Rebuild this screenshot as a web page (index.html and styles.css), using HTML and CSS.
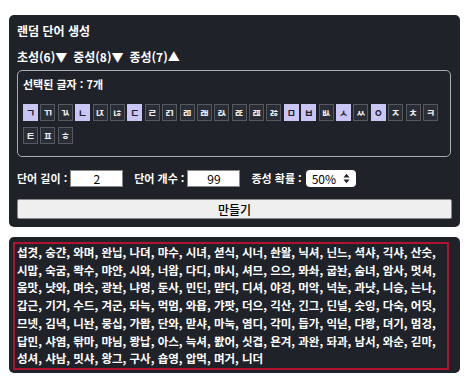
FILE: index.html
```html
<!DOCTYPE html>
<html lang="ko">
<head>
    <meta charset="UTF-8">
    <meta name="viewport" content="width=device-width, initial-scale=1.0">
    <title>랜덤 단어 생성</title>
    <link rel="stylesheet" href="styles.css">
</head>
<body>
    <div class="panel" id="generator">
        <h1 id="title">랜덤 단어 생성</h1>
        <div id="tabs">
            <span>초성(6)▼</span>
            <span>중성(8)▼</span>
            <span>종성(7)▲</span>
        </div>
        <div id="picker">
            <p id="picked">선택된 글자 : 7개</p>
            <div id="jamo">
                <button class="on">ㄱ</button>
                <button>ㄲ</button>
                <button>ㄳ</button>
                <button class="on">ㄴ</button>
                <button>ㄵ</button>
                <button>ㄶ</button>
                <button class="on">ㄷ</button>
                <button>ㄹ</button>
                <button>ㄺ</button>
                <button>ㄻ</button>
                <button>ㄼ</button>
                <button>ㄽ</button>
                <button>ㄾ</button>
                <button>ㄿ</button>
                <button>ㅀ</button>
                <button class="on">ㅁ</button>
                <button class="on">ㅂ</button>
                <button>ㅄ</button>
                <button class="on">ㅅ</button>
                <button>ㅆ</button>
                <button class="on">ㅇ</button>
                <button>ㅈ</button>
                <button>ㅊ</button>
                <button>ㅋ</button>
                <button>ㅌ</button>
                <button>ㅍ</button>
                <button>ㅎ</button>
            </div>
        </div>
        <div id="options">
            <label for="len">단어 길이 :</label>
            <input id="len" type="text" value="2">
            <label for="count" class="next">단어 개수 :</label>
            <input id="count" type="text" value="99">
            <label for="prob" class="next">종성 확률 :</label>
            <select id="prob">
                <option>50%</option>
            </select>
        </div>
        <button id="make">만들기</button>
    </div>
    <div class="panel" id="output">
        <div id="words">섭겻, 숭갼, 와며, 완닙, 나뎌, 먀수, 시녀, 셛식, 시너, 솬왈, 닉셔, 닌느, 셕샤, 긱샤, 산숫, 시맙, 숙굼, 뫅수, 먀얀, 시와, 너왐, 다디, 먀시, 셔므, 으으, 뫄솨, 굽놘, 숨녀, 암사, 멋셔, 움맛, 냣와, 며숫, 광놘, 냐멍, 둔사, 민딘, 먇더, 디셔, 야겅, 머악, 넉눈, 과냣, 니승, 는나, 갑근, 기거, 수드, 겨군, 돠늑, 먹멈, 와욥, 갸팟, 더으, 긱산, 긴그, 딘널, 숫잉, 다숙, 어덧, 므넷, 김녁, 니놘, 뭉십, 가뫔, 단와, 맏샤, 마눅, 염디, 각미, 듭가, 익넏, 댜뫙, 뎌기, 멈겅, 답민, 샤염, 돢마, 먀님, 뫙납, 아스, 늑셔, 뫐어, 싯겹, 욘겨, 과완, 돠과, 남서, 와순, 긷마, 성셔, 샤남, 밋샤, 왕그, 구사, 숍영, 압먹, 며거, 니더</div>
    </div>
</body>
</html>
```

FILE: styles.css
```css
:root {
    --panelbg: #1f2229;
    --text: #fff;
    --line: #a9acb2;
    --tile: #2a2d35;
    --tileline: #555960;
    --picked: #c9c6f6;
    --red: #b3122e;
}
* {
    margin: 0;
    padding: 0;
    box-sizing: border-box;
    font-family: 'Noto Sans CJK KR', 'Noto Sans', sans-serif;
}
body {
    background-color: #fff;
    padding: 15px 9px;
}
.panel {
    width: 451px;
    background-color: var(--panelbg);
    color: var(--text);
    border-radius: 5px;
}
#generator {
    padding: 6px 9px 8px 8px;
}
#title {
    font-size: 12px;
    font-weight: bold;
    line-height: 20px;
}
#tabs {
    display: flex;
    gap: 6px;
    margin-top: 6px;
    font-size: 12px;
    font-weight: bold;
    line-height: 20px;
}
#picker {
    margin-top: 3px;
    border: 1px solid var(--line);
    border-radius: 5px;
    padding: 4px 5px 12px;
}
#picked {
    font-size: 11px;
    font-weight: bold;
    line-height: 18px;
}
#jamo {
    display: flex;
    flex-wrap: wrap;
    gap: 6px 2.4px;
    margin-top: 11px;
}
#jamo button {
    width: 15px;
    height: 17px;
    font-size: 10px;
    font-weight: bold;
    line-height: 15px;
    color: #eee;
    background-color: var(--tile);
    border: 1px solid var(--tileline);
}
#jamo button.on {
    color: #1d1d2b;
    background-color: var(--picked);
    border-color: var(--picked);
}
#options {
    display: flex;
    align-items: center;
    height: 20px;
    margin-top: 11px;
    font-size: 11px;
    font-weight: bold;
}
#options label.next {
    margin-left: 11px;
}
#options input {
    width: 53px;
    height: 17px;
    margin-left: 3px;
    border: 1px solid #888;
    background-color: #fff;
    color: #000;
    font-size: 12px;
    text-align: center;
}
#options select {
    appearance: none;
    width: 50px;
    height: 17px;
    margin-left: 4px;
    padding-left: 6px;
    border: none;
    border-radius: 4px;
    color: #000;
    font-size: 12px;
    background: #fff url("data:image/svg+xml,%3Csvg xmlns='http://www.w3.org/2000/svg' width='7' height='11' viewBox='0 0 7 11'%3E%3Cpath d='M0.5 4.5L3.5 0.8L6.5 4.5Z M0.5 6.5L3.5 10.2L6.5 6.5Z' fill='%23222'/%3E%3C/svg%3E") no-repeat right 6px center;
}
#make {
    display: block;
    width: 435px;
    height: 20px;
    margin-top: 11px;
    border: 1px solid #8a8a8a;
    border-radius: 2px;
    background-color: #efefef;
    color: #000;
    font-size: 12px;
    font-weight: 500;
}
#output {
    margin-top: 10px;
    padding: 5px 11px 3px 4px;
}
#words {
    border: 2px solid var(--red);
    padding: 0 2px 0 2px;
    font-size: 11.5px;
    font-weight: bold;
    line-height: 17.7px;
    word-break: keep-all;
}
```
